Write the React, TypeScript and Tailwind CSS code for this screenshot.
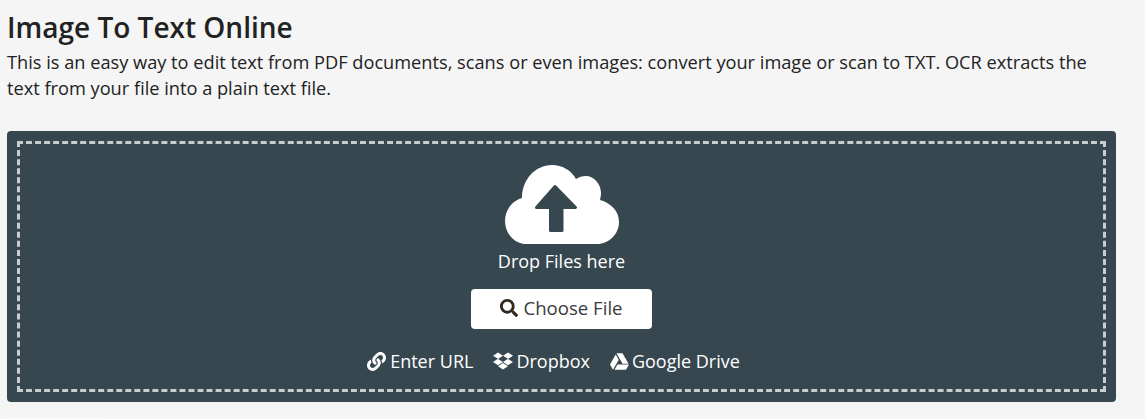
import { FaDropbox, FaGoogleDrive, FaLink, FaSearch } from 'react-icons/fa';

function CloudIcon() {
  return (
    <svg viewBox="0 0 114 79" className="mt-[21px] h-[79px] w-[114px]">
      <path
        fill="#fff"
        d="M22 79C9 79 0 68 0 56C0 45 7 36 17 33C17 15 30 0 47 0C57 0 66 5 71 14C74 12 77 11 81 11C89 11 96 19 96 28C96 30 95.5 33 95 35C106 38 114 46 114 57C114 69 104 79 92 79Z"
      />
      <path
        fill="#37474f"
        stroke="#37474f"
        strokeWidth="3"
        strokeLinejoin="round"
        d="M50 21.5L70.5 42.5L57 42.5L57 65.5L45.5 65.5L45.5 42.5L31.5 42.5Z"
      />
    </svg>
  );
}

export default function App() {
  return (
    <div className="h-[419px] overflow-hidden bg-[#f5f5f5] pl-[7px] pr-[29px] pt-[8px] font-['Open_Sans',sans-serif] text-[#222]">
      <h1 className="text-[28px] leading-[38px] font-semibold">Image To Text Online</h1>
      <p className="mt-[3px] text-[18.22px] leading-[26px]">
        This is an easy way to edit text from PDF documents, scans or even images: convert your image or scan to TXT. OCR extracts the text from your file into a plain text file.
      </p>

      <div className="mt-[30px] h-[271px] rounded-[4px] bg-[#37474f] p-[10px]">
        <div className="flex h-[251px] flex-col items-center border-[3px] border-dashed border-[#c8cdcf] text-white">
          <CloudIcon />
          <div className="mt-[5px] text-[18px] leading-[24px]">Drop Files here</div>
          <button className="mt-[16px] flex h-[40px] w-[181px] items-center justify-center gap-[5px] rounded-[4px] bg-white pb-[2px] text-[18.6px] font-medium text-[#3a3a3a]">
            <FaSearch className="h-[18px] w-[18px] text-[#33291f]" />
            Choose File
          </button>
          <div className="mt-[20px] mr-[16px] flex items-center gap-[20px] text-[18px] leading-[24px]">
            <span className="flex items-center gap-[4px]"><FaLink className="h-[19px] w-[19px]" />Enter URL</span>
            <span className="flex items-center gap-[3px]"><FaDropbox className="h-[20px] w-[20px]" />Dropbox</span>
            <span className="flex items-center gap-[3px]"><FaGoogleDrive className="h-[19px] w-[19px]" />Google Drive</span>
          </div>
        </div>
      </div>
      <div className="mt-[16px] h-[1px] w-[98px] bg-[#f8f8f8]" />
    </div>
  );
}
